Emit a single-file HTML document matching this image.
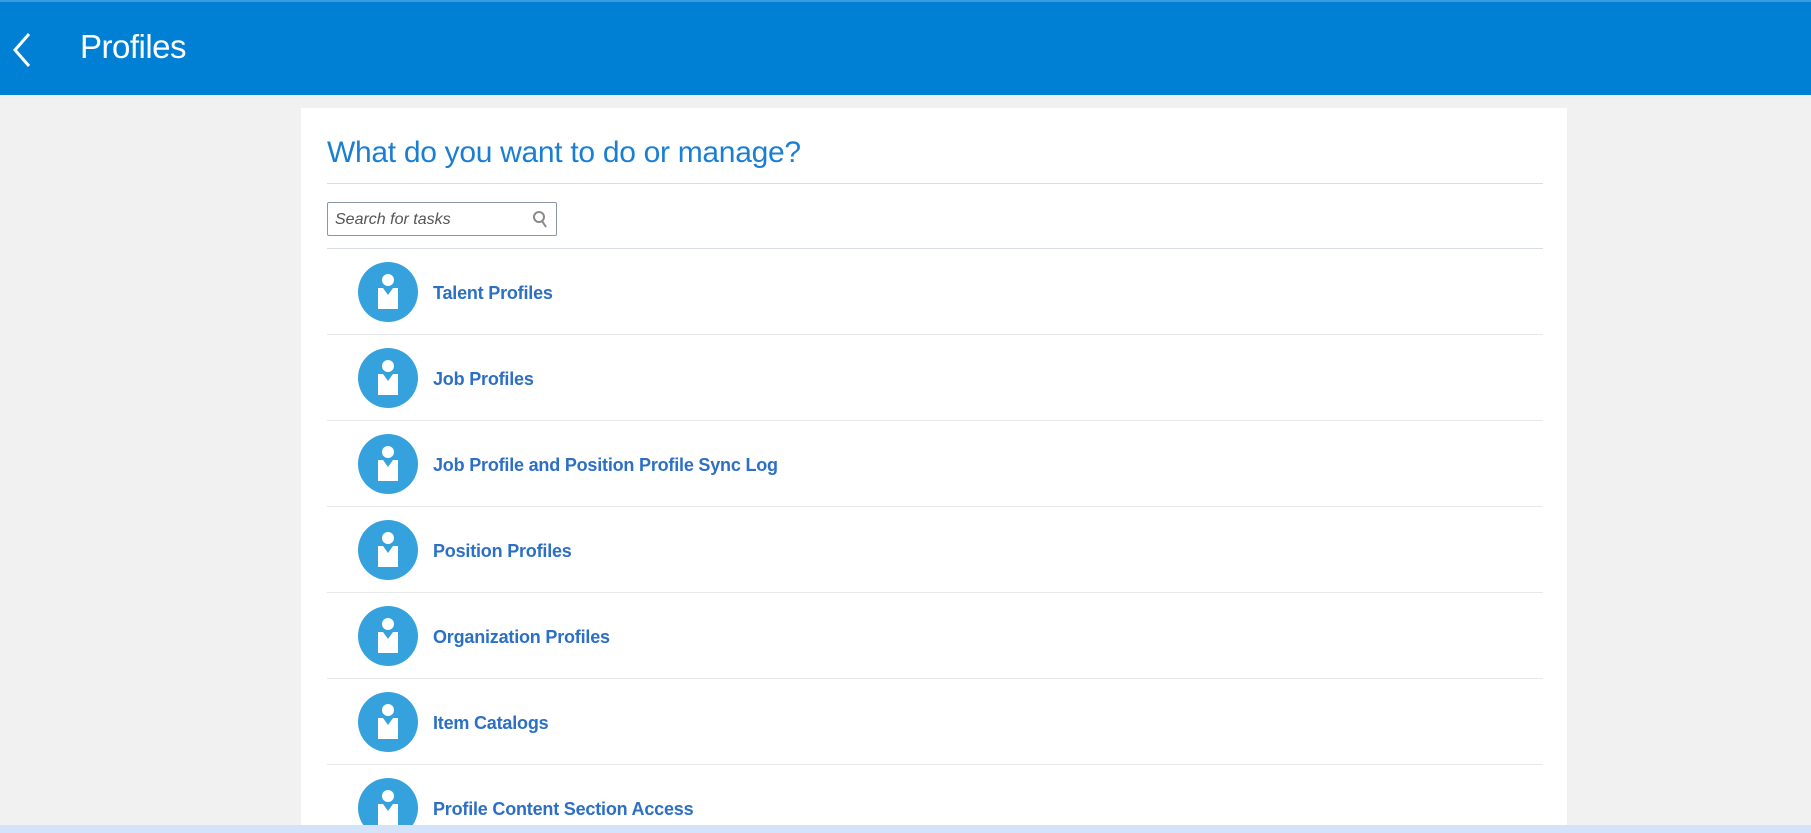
<!DOCTYPE html>
<html><head><meta charset="utf-8"><style>
*{margin:0;padding:0;box-sizing:border-box}
html,body{width:1811px;height:833px;overflow:hidden}
body{background:#f1f1f1;font-family:"Liberation Sans",sans-serif;position:relative}
.hdr{position:absolute;left:0;top:0;width:1811px;height:95px;background:#0080d4;border-top:2px solid #3a9be0}
.hdr .t{position:absolute;left:80px;top:26px;color:#fff;font-size:33px;font-weight:300;letter-spacing:-0.5px}
.card{position:absolute;left:301px;top:108px;width:1266px;height:717px;background:#fff;overflow:hidden}
.h1{position:absolute;left:26px;top:28px;color:#1a7fd4;font-size:30px;font-weight:normal;letter-spacing:-0.3px}
.rule{position:absolute;left:26px;width:1216px;height:1px;background:#d9dee6}
.search{position:absolute;left:26px;top:94px;width:230px;height:34px;border:1px solid #8a97a6;border-radius:2px}
.search span{position:absolute;left:7px;top:8px;font-style:italic;color:#555;font-size:16px}
.row{position:absolute;left:26px;width:1216px;height:86px;border-bottom:1px solid #e6e8eb}
.row svg{position:absolute;left:31px;top:13px}
.row span{position:absolute;left:106px;top:34px;color:#2c6fc6;font-size:18px;font-weight:bold;letter-spacing:-0.2px}
.bot{position:absolute;left:0;top:825px;width:1811px;height:8px;background:#d4e3fa}
</style></head><body>
<div class="hdr">
<svg style="position:absolute;left:10px;top:30px" width="24" height="36" viewBox="0 0 24 36"><path d="M19 2 L5 18 L19 34" stroke="#fff" stroke-width="3" fill="none"/></svg>
<div class="t">Profiles</div></div>
<div class="card">
<div class="h1">What do you want to do or manage?</div>
<div class="rule" style="top:75px"></div>
<div class="search"><span>Search for tasks</span>
<svg style="position:absolute;right:6px;top:7px" width="18" height="20" viewBox="0 0 18 20"><circle cx="7" cy="7" r="5" stroke="#8a8a8a" stroke-width="2" fill="none"/><path d="M10 11 L14 17" stroke="#8a8a8a" stroke-width="2"/></svg></div>
<div class="rule" style="top:140px"></div>
<div style="position:absolute;left:0;top:141px;width:1266px">
<div class="row" style="top:0"><svg width="60" height="60"><circle cx="30" cy="30" r="30" fill="#35a2de"/><circle cx="30" cy="18" r="6" fill="#fff"/><path d="M20 26 L25 26 L30 33 L35 26 L40 26 L40 47 L20 47Z" fill="#fff"/></svg><span>Talent Profiles</span></div>
<div class="row" style="top:86px"><svg width="60" height="60"><circle cx="30" cy="30" r="30" fill="#35a2de"/><circle cx="30" cy="18" r="6" fill="#fff"/><path d="M20 26 L25 26 L30 33 L35 26 L40 26 L40 47 L20 47Z" fill="#fff"/></svg><span>Job Profiles</span></div>
<div class="row" style="top:172px"><svg width="60" height="60"><circle cx="30" cy="30" r="30" fill="#35a2de"/><circle cx="30" cy="18" r="6" fill="#fff"/><path d="M20 26 L25 26 L30 33 L35 26 L40 26 L40 47 L20 47Z" fill="#fff"/></svg><span>Job Profile and Position Profile Sync Log</span></div>
<div class="row" style="top:258px"><svg width="60" height="60"><circle cx="30" cy="30" r="30" fill="#35a2de"/><circle cx="30" cy="18" r="6" fill="#fff"/><path d="M20 26 L25 26 L30 33 L35 26 L40 26 L40 47 L20 47Z" fill="#fff"/></svg><span>Position Profiles</span></div>
<div class="row" style="top:344px"><svg width="60" height="60"><circle cx="30" cy="30" r="30" fill="#35a2de"/><circle cx="30" cy="18" r="6" fill="#fff"/><path d="M20 26 L25 26 L30 33 L35 26 L40 26 L40 47 L20 47Z" fill="#fff"/></svg><span>Organization Profiles</span></div>
<div class="row" style="top:430px"><svg width="60" height="60"><circle cx="30" cy="30" r="30" fill="#35a2de"/><circle cx="30" cy="18" r="6" fill="#fff"/><path d="M20 26 L25 26 L30 33 L35 26 L40 26 L40 47 L20 47Z" fill="#fff"/></svg><span>Item Catalogs</span></div>
<div class="row" style="top:516px"><svg width="60" height="60"><circle cx="30" cy="30" r="30" fill="#35a2de"/><circle cx="30" cy="18" r="6" fill="#fff"/><path d="M20 26 L25 26 L30 33 L35 26 L40 26 L40 47 L20 47Z" fill="#fff"/></svg><span>Profile Content Section Access</span></div>
</div>
</div>
<div class="bot"></div>
</body></html>
